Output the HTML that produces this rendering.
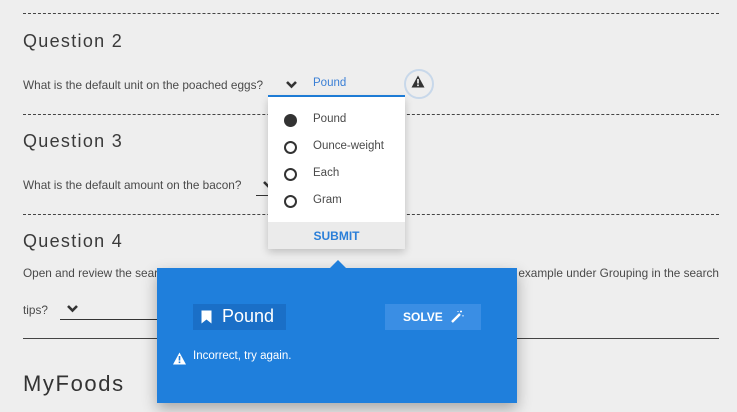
<!DOCTYPE html>
<html><head><style>
body{margin:0;width:737px;height:412px;background:#eeeeee;font-family:"Liberation Sans",sans-serif;position:relative;overflow:hidden;color:#444}
.a{position:absolute;white-space:nowrap}
.dash{position:absolute;left:23px;width:696px;border-top:1px dashed #444}
.h{font-size:18px;letter-spacing:1.3px;color:#3a3a3a}
.t{font-size:11.8px;color:#4a4a4a}
.rad{position:absolute;left:284px;width:9px;height:9px;border:2px solid #333;border-radius:50%}
.ol{font-size:11.5px;color:#4a4a4a;position:absolute;left:313px}
</style></head><body>
<div class="dash" style="top:13px"></div>
<div class="a h" style="left:23px;top:31px">Question 2</div>
<div class="a t" style="left:23px;top:78px">What is the default unit on the poached eggs?</div>
<svg class="a" style="left:285px;top:80px" width="13" height="9" viewBox="0 0 13 9"><path d="M2 2l4.5 4.5L11 2" stroke="#333" stroke-width="2.6" fill="none"/></svg>
<div class="a" style="left:313px;top:77px;font-size:11.5px;color:#3a7fd5">Pound</div>
<div class="a" style="left:268px;top:95px;width:137px;height:2px;background:#1f7fdc"></div>
<div class="a" style="left:404px;top:69px;width:26px;height:26px;border:2px solid #c8d8ea;border-radius:50%"></div>
<svg class="a" style="left:411px;top:75px" width="14" height="13" viewBox="0 0 14 13"><path d="M7 0.5L13.5 12.5H0.5Z" fill="#333"/><rect x="6.2" y="4" width="1.6" height="4.5" fill="#fff"/><rect x="6.2" y="9.5" width="1.6" height="1.6" fill="#fff"/></svg>
<div class="dash" style="top:114px"></div>
<div class="a h" style="left:23px;top:131px">Question 3</div>
<div class="a t" style="left:23px;top:178px">What is the default amount on the bacon?</div>
<div class="a" style="left:256px;top:195px;width:20px;height:1px;background:#333"></div>
<svg class="a" style="left:262px;top:180px" width="13" height="9" viewBox="0 0 13 9"><path d="M2 2l4.5 4.5L11 2" stroke="#333" stroke-width="2.6" fill="none"/></svg>
<div class="dash" style="top:214px"></div>
<div class="a h" style="left:23px;top:231px">Question 4</div>
<div class="a t" style="left:23px;top:266px">Open and review the search tips. What is the name of the tag used in the</div>
<div class="a t" style="right:18px;top:266px">example under Grouping in the search</div>
<div class="a t" style="left:23px;top:303px">tips?</div>
<svg class="a" style="left:66px;top:304px" width="13" height="9" viewBox="0 0 13 9"><path d="M2 2l4.5 4.5L11 2" stroke="#333" stroke-width="2.6" fill="none"/></svg>
<div class="a" style="left:60px;top:319px;width:110px;height:1px;background:#333"></div>
<div class="a" style="left:23px;top:338px;width:696px;height:1px;background:#444"></div>
<div class="a" style="left:23px;top:371px;font-size:22px;letter-spacing:1.6px;color:#333">MyFoods</div>

<div class="a" style="left:268px;top:97px;width:137px;height:152px;background:#fff;box-shadow:0 3px 8px rgba(0,0,0,.2)"></div>
<div class="rad" style="top:114px;background:#333"></div>
<div class="ol" style="top:113px">Pound</div>
<div class="rad" style="top:141px"></div>
<div class="ol" style="top:140px">Ounce-weight</div>
<div class="rad" style="top:168px"></div>
<div class="ol" style="top:167px">Each</div>
<div class="rad" style="top:195px"></div>
<div class="ol" style="top:194px">Gram</div>
<div class="a" style="left:268px;top:222px;width:137px;height:27px;background:#ebebeb;text-align:center;line-height:28px;font-size:12px;font-weight:bold;color:#2b7fd8">SUBMIT</div>

<div class="a" style="left:157px;top:268px;width:360px;height:135px;background:#1f7fdc;box-shadow:0 6px 14px rgba(0,0,0,.3)"></div>
<div class="a" style="left:330px;top:260px;width:0;height:0;border-left:8px solid transparent;border-right:8px solid transparent;border-bottom:8px solid #1f7fdc"></div>
<div class="a" style="left:193px;top:304px;width:93px;height:26px;background:#1a6fc7"></div>
<svg class="a" style="left:201px;top:310px" width="11" height="14" viewBox="0 0 11 14"><path d="M0.5 0.5H10.5V13.5L5.5 9.5L0.5 13.5Z" fill="#fff"/></svg>
<div class="a" style="left:222px;top:306px;font-size:18px;color:#fff">Pound</div>
<div class="a" style="left:385px;top:304px;width:96px;height:26px;background:#3a8ee4;color:#fff;font-weight:bold;font-size:12px;line-height:27px;text-indent:18px">SOLVE</div>
<svg class="a" style="left:450px;top:310px" width="14" height="13" viewBox="0 0 14 13"><path d="M2 12L10 4" stroke="#fff" stroke-width="2.4"/><path d="M11 0.5v2M12 1.5h-2M13 5v1.5M8 1v1" stroke="#fff" stroke-width="1"/></svg>
<svg class="a" style="left:172px;top:352px" width="15" height="13" viewBox="0 0 14 13"><path d="M7 0.5L13.5 12.5H0.5Z" fill="#fff"/><rect x="6.2" y="4" width="1.6" height="4.5" fill="#1f7fdc"/><rect x="6.2" y="9.5" width="1.6" height="1.6" fill="#1f7fdc"/></svg>
<div class="a" style="left:193px;top:350px;font-size:11.5px;color:#fff">Incorrect, try again.</div>
</body></html>
